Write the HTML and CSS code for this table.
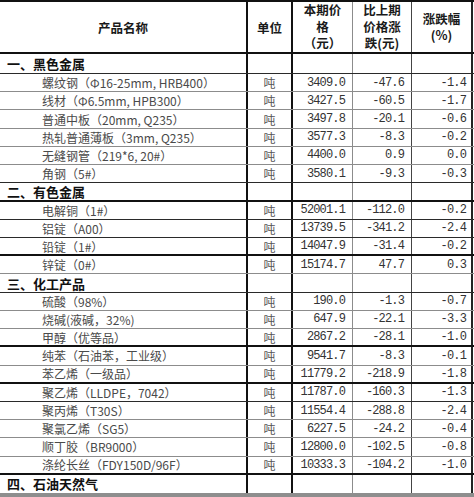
FILE: index.html
```html
<!DOCTYPE html>
<html lang="zh">
<head>
<meta charset="utf-8">
<title>价格表</title>
<link rel="stylesheet" href="styles.css">
</head>
<body>
<div class="sheet">
  <div class="row head">
    <div class="c c1 hc">产品名称</div>
    <div class="c c2 hc">单位</div>
    <div class="c c3 hc"><div class="hl"><span>本期价</span><span>格</span><span>（元）</span></div></div>
    <div class="c c4 hc"><div class="hl"><span>比上期</span><span>价格涨</span><span>跌(元)</span></div></div>
    <div class="c c5 hc"><div class="hl"><span>涨跌幅</span><span>(%)</span></div></div>
  </div>

  <div class="row sec first mid"><div class="c c1 st">一、黑色金属</div><div class="c c2"></div><div class="c c3"></div><div class="c c4"></div><div class="c c5"></div></div>
  <div class="row thin"><div class="c c1 nm">螺纹钢（Φ16-25mm, HRB400）</div><div class="c c2 u">吨</div><div class="c c3 n">3409.0</div><div class="c c4 n">-47.6</div><div class="c c5 n">-1.4</div></div>
  <div class="row thin"><div class="c c1 nm">线材（Φ6.5mm, HPB300）</div><div class="c c2 u">吨</div><div class="c c3 n">3427.5</div><div class="c c4 n">-60.5</div><div class="c c5 n">-1.7</div></div>
  <div class="row thin"><div class="c c1 nm">普通中板（20mm, Q235）</div><div class="c c2 u">吨</div><div class="c c3 n">3497.8</div><div class="c c4 n">-20.1</div><div class="c c5 n">-0.6</div></div>
  <div class="row thin"><div class="c c1 nm">热轧普通薄板（3mm, Q235）</div><div class="c c2 u">吨</div><div class="c c3 n">3577.3</div><div class="c c4 n">-8.3</div><div class="c c5 n">-0.2</div></div>
  <div class="row thin"><div class="c c1 nm">无缝钢管（219*6, 20#）</div><div class="c c2 u">吨</div><div class="c c3 n">4400.0</div><div class="c c4 n">0.9</div><div class="c c5 n">0.0</div></div>
  <div class="row mid"><div class="c c1 nm">角钢（5#）</div><div class="c c2 u">吨</div><div class="c c3 n">3580.1</div><div class="c c4 n">-9.3</div><div class="c c5 n">-0.3</div></div>

  <div class="row thick"><div class="c c1 st">二、有色金属</div><div class="c c2"></div><div class="c c3"></div><div class="c c4"></div><div class="c c5"></div></div>
  <div class="row mid"><div class="c c1 nm">电解铜（1#）</div><div class="c c2 u">吨</div><div class="c c3 n">52001.1</div><div class="c c4 n">-112.0</div><div class="c c5 n">-0.2</div></div>
  <div class="row mid"><div class="c c1 nm">铝锭（A00）</div><div class="c c2 u">吨</div><div class="c c3 n">13739.5</div><div class="c c4 n">-341.2</div><div class="c c5 n">-2.4</div></div>
  <div class="row thick"><div class="c c1 nm">铅锭（1#）</div><div class="c c2 u">吨</div><div class="c c3 n">14047.9</div><div class="c c4 n">-31.4</div><div class="c c5 n">-0.2</div></div>
  <div class="row thin"><div class="c c1 nm">锌锭（0#）</div><div class="c c2 u">吨</div><div class="c c3 n">15174.7</div><div class="c c4 n">47.7</div><div class="c c5 n">0.3</div></div>

  <div class="row mid"><div class="c c1 st">三、化工产品</div><div class="c c2"></div><div class="c c3"></div><div class="c c4"></div><div class="c c5"></div></div>
  <div class="row thin"><div class="c c1 nm">硫酸（98%）</div><div class="c c2 u">吨</div><div class="c c3 n">190.0</div><div class="c c4 n">-1.3</div><div class="c c5 n">-0.7</div></div>
  <div class="row thin"><div class="c c1 nm">烧碱(液碱，32%)</div><div class="c c2 u">吨</div><div class="c c3 n">647.9</div><div class="c c4 n">-22.1</div><div class="c c5 n">-3.3</div></div>
  <div class="row thick"><div class="c c1 nm">甲醇（优等品）</div><div class="c c2 u">吨</div><div class="c c3 n">2867.2</div><div class="c c4 n">-28.1</div><div class="c c5 n">-1.0</div></div>
  <div class="row thin"><div class="c c1 nm">纯苯（石油苯，工业级）</div><div class="c c2 u">吨</div><div class="c c3 n">9541.7</div><div class="c c4 n">-8.3</div><div class="c c5 n">-0.1</div></div>
  <div class="row thick"><div class="c c1 nm">苯乙烯（一级品）</div><div class="c c2 u">吨</div><div class="c c3 n">11779.2</div><div class="c c4 n">-218.9</div><div class="c c5 n">-1.8</div></div>
  <div class="row mid"><div class="c c1 nm">聚乙烯（LLDPE，7042）</div><div class="c c2 u">吨</div><div class="c c3 n">11787.0</div><div class="c c4 n">-160.3</div><div class="c c5 n">-1.3</div></div>
  <div class="row thin"><div class="c c1 nm">聚丙烯（T30S）</div><div class="c c2 u">吨</div><div class="c c3 n">11554.4</div><div class="c c4 n">-288.8</div><div class="c c5 n">-2.4</div></div>
  <div class="row thin"><div class="c c1 nm">聚氯乙烯（SG5）</div><div class="c c2 u">吨</div><div class="c c3 n">6227.5</div><div class="c c4 n">-24.2</div><div class="c c5 n">-0.4</div></div>
  <div class="row thin"><div class="c c1 nm">顺丁胶（BR9000）</div><div class="c c2 u">吨</div><div class="c c3 n">12800.0</div><div class="c c4 n">-102.5</div><div class="c c5 n">-0.8</div></div>
  <div class="row thick"><div class="c c1 nm">涤纶长丝（FDY150D/96F）</div><div class="c c2 u">吨</div><div class="c c3 n">10333.3</div><div class="c c4 n">-104.2</div><div class="c c5 n">-1.0</div></div>

  <div class="row last"><div class="c c1 st">四、石油天然气</div><div class="c c2"></div><div class="c c3"></div><div class="c c4"></div><div class="c c5"></div></div>
  <div class="band"></div>
</div>
</body>
</html>
```

FILE: styles.css
```css
html, body {
  margin: 0;
  padding: 0;
  background: #fff;
}

.sheet {
  width: 474px;
  height: 497px;
  overflow: hidden;
  font-family: "Noto Sans CJK SC", "Liberation Sans", sans-serif;
  color: #444;
}

.row {
  display: grid;
  grid-template-columns: 248px 45px 60px 59px 61px;
  height: 18.23px;
  box-sizing: border-box;
  border-bottom: 1px solid #8c8c8c;
}

.row.thin { border-bottom: 1px solid #8c8c8c; }
.row.mid { border-bottom: 1px solid #2a2a2a; }
.row.thick { border-bottom: 2px solid #111; }

.row.head {
  height: 54px;
  border-top: 2px solid #111;
  border-bottom: 2px solid #111;
}

.row.first { height: 20px; }
.row.last { height: 18px; border-bottom: none; }

.c {
  box-sizing: border-box;
  display: flex;
  align-items: center;
  overflow: hidden;
  white-space: nowrap;
}

.c1 { border-right: 2px solid #111; }
.c2 { border-right: 2px solid #111; }
.c3 { border-right: 1px solid #8c8c8c; }
.c4 { border-right: 1px solid #444; }
.c5 { border-right: 2px solid #222; }

.hc {
  justify-content: center;
  text-align: center;
  font-size: 12.5px;
  font-weight: 700;
  color: #1a1a1a;
}

.hl {
  display: flex;
  flex-direction: column;
  align-items: center;
}

.hl span {
  display: block;
  height: 16.5px;
  line-height: 16.5px;
}

.st {
  padding-left: 7px;
  font-size: 13px;
  font-weight: 700;
  color: #111;
}

.nm {
  padding-left: 42px;
  font-size: 12px;
  color: #4a4a4a;
}

.u {
  justify-content: center;
  font-size: 12px;
  color: #555;
}

.n {
  justify-content: flex-end;
  padding-right: 7px;
  font-family: "Liberation Mono", "DejaVu Sans Mono", monospace;
  font-size: 12px;
  letter-spacing: -0.85px;
  color: #333;
}

.c5.n { padding-right: 5px; }

.band {
  height: 4px;
  background: #8e8e8e;
}
```
